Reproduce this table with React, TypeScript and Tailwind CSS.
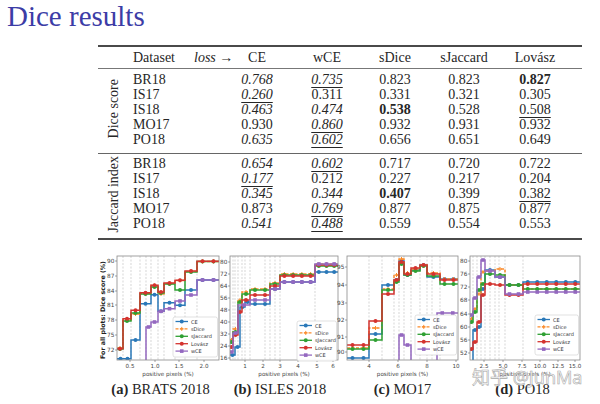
import React from "react";

type Step = [number, number][];

type ChartSpec = {
  id: string;
  width: number;
  boxX: number;
  boxW: number;
  xticks: [number, string][];
  yticks: [number, string][];
  vlines: number[];
  series: Step[]; // CE, sDice, sJaccard, Lovász, wCE
  legend: [number, number];
  label: string;
  name: string;
  captionPad: string;
  yTitle?: boolean;
};

const BOX_H = 104;
const TOP = 2;

const STYLES = [
  { name: "CE", color: "#2a78b8", marker: "o" },
  { name: "sDice", color: "#fb8b2a", marker: "+", dash: true },
  { name: "sJaccard", color: "#2fa033", marker: "o" },
  { name: "Lovász", color: "#d4332f", marker: "o" },
  { name: "wCE", color: "#9468c0", marker: "s" },
];

const DICE = [
  ["BR18", "0.768i 0.735iu 0.823 0.823 0.827b"],
  ["IS17", "0.260iu 0.311 0.331 0.321 0.305"],
  ["IS18", "0.463i 0.474i 0.538b 0.528 0.508u"],
  ["MO17", "0.930 0.860iu 0.932 0.931 0.932"],
  ["PO18", "0.635i 0.602iu 0.656 0.651 0.649"],
];

const JACCARD = [
  ["BR18", "0.654i 0.602iu 0.717 0.720 0.722"],
  ["IS17", "0.177iu 0.212 0.227 0.217 0.204"],
  ["IS18", "0.345i 0.344i 0.407b 0.399 0.382u"],
  ["MO17", "0.873 0.769iu 0.877 0.875 0.877"],
  ["PO18", "0.541i 0.488iu 0.559 0.554 0.553"],
];

const CHARTS: ChartSpec[] = [
  {
    id: "a",
    width: 123,
    boxX: 21,
    boxW: 102,
    xticks: [[13, "0.5"], [38, "1.0"], [62, "1.5"], [87, "2.0"]],
    yticks: [[5, "90"], [20, "87"], [35, "84"], [49, "81"], [64, "78"], [79, "75"], [94, "72"]],
    vlines: [6, 14, 23, 29, 34, 41, 47, 58, 68, 80],
    series: [
      [[0, 102.7], [14, 84], [23, 47.7], [34, 38.7], [41, 55.3], [47, 46.7], [58, 49.3], [68, 34], [80, 24]],
      [[0, 92], [6, 64], [14, 58], [23, 37.5], [34, 29.5], [41, 38], [47, 27.5], [58, 24.5], [68, 15.5], [80, 5.5]],
      [[0, 93], [6, 65], [14, 57], [23, 38], [34, 31], [41, 37], [47, 28], [58, 34], [68, 16], [80, 5.5]],
      [[0, 92.7], [6, 62.7], [14, 54.3], [23, 36.7], [34, 29.3], [41, 36], [47, 27], [58, 24.3], [68, 15], [80, 5.3]],
      [[0, 112], [29, 71], [34, 66], [41, 55.3], [47, 52.7], [58, 45], [68, 39], [80, 24]],
    ],
    legend: [56, 61],
    label: "(a)",
    name: "BRATS 2018",
    captionPad: "pl-[6px]",
    yTitle: true,
  },
  {
    id: "b",
    width: 119,
    boxX: 11,
    boxW: 108,
    xticks: [[15, "1"], [33, "2"], [50, "3"], [68, "4"], [87, "5"], [103, "6"]],
    yticks: [[6, "80"], [18, "72"], [30, "64"], [42, "56"], [54, "48"], [66, "40"], [78, "32"], [90, "24"], [102, "16"]],
    vlines: [3, 5, 8, 12, 15, 20, 35, 40, 45, 50, 85],
    series: [
      [[0, 99], [5, 91], [10, 51], [15, 46], [20, 48], [40, 33], [50, 26], [85, 16]],
      [[0, 84], [3, 73], [8, 44], [12, 36], [20, 33], [40, 27], [50, 18], [85, 8]],
      [[0, 86], [3, 76], [8, 46], [12, 38], [20, 34], [40, 28], [50, 19], [85, 10]],
      [[0, 91], [3, 79], [8, 56], [12, 44], [20, 39], [40, 30], [50, 20], [85, 9]],
      [[0, 96], [3, 77], [8, 49], [20, 44], [40, 33], [50, 26], [85, 8]],
    ],
    legend: [67, 65],
    label: "(b)",
    name: "ISLES 2018",
    captionPad: "pl-[3px]",
  },
  {
    id: "c",
    width: 120,
    boxX: 9,
    boxW: 111,
    xticks: [[22, "4"], [51, "6"], [80, "8"], [109, "10"]],
    yticks: [[11, "95"], [29, "94"], [47, "93"], [64, "92"], [81, "91"], [96, "90"]],
    vlines: [22, 35, 47, 52, 57, 64, 73, 80, 85, 93],
    series: [
      [[0, 102], [22, 78], [35, 29], [47, 24], [52, 5], [57, 19], [64, 14], [73, 9], [80, 21], [93, 23]],
      [[0, 92], [22, 72], [35, 33], [47, 19], [52, 3], [57, 17], [64, 13], [73, 9], [80, 17], [93, 23]],
      [[0, 93], [22, 84], [35, 34], [47, 26], [52, 8], [57, 19], [64, 15], [73, 10], [80, 20], [93, 28]],
      [[0, 89], [22, 65], [35, 38], [47, 24], [52, 6], [57, 18], [64, 12], [73, 9], [80, 18], [93, 24]],
      [[0, 115], [52, 79], [57, 89], [64, 115], [90, 57]],
    ],
    legend: [68, 59],
    label: "(c)",
    name: "MO17",
    captionPad: "pl-[9px]",
  },
  {
    id: "d",
    width: 122,
    boxX: 12,
    boxW: 110,
    xticks: [[14, "2.5"], [33, "5.0"], [52, "7.5"], [70, "10.0"], [88, "12.5"], [105, "15.0"]],
    yticks: [[5, "80"], [18, "76"], [31, "72"], [44, "68"], [58, "64"], [71, "60"], [84, "56"], [97, "52"]],
    vlines: [3, 7, 11, 15, 20, 25, 29, 35, 53],
    series: [
      [[0, 115], [3, 74], [7, 71], [11, 33], [15, 14], [25, 21], [35, 29], [53, 26]],
      [[0, 63], [3, 53], [7, 38], [11, 16], [15, 15], [25, 13], [35, 29], [53, 33]],
      [[0, 66], [3, 56], [7, 34], [11, 28], [15, 18], [25, 19], [35, 29], [53, 33]],
      [[0, 93], [3, 86], [7, 66], [11, 39], [15, 28], [25, 29], [35, 39], [53, 28]],
      [[0, 59], [3, 42], [7, 21], [11, 4], [15, 15], [25, 21], [35, 38], [53, 36]],
    ],
    legend: [65, 59],
    label: "(d)",
    name: "PO18",
    captionPad: "pl-[7px]",
  },
];

function Marker({ x, y, color, kind }: { x: number; y: number; color: string; kind: string }) {
  if (kind === "s") return <rect x={x - 1.8} y={y - 1.8} width={3.6} height={3.6} fill={color} />;
  if (kind === "+")
    return <path d={`M${x - 2} ${y}H${x + 2}M${x} ${y - 2}V${y + 2}`} stroke={color} strokeWidth={1} />;
  return <circle cx={x} cy={y} r={2} fill={color} />;
}

function stepPath(steps: Step, w: number) {
  let d = `M${steps[0][0]} ${steps[0][1]}`;
  for (let i = 1; i < steps.length; i++) d += ` H${steps[i][0]} V${steps[i][1]}`;
  return d + ` H${w}`;
}

function Chart({ spec }: { spec: ChartSpec }) {
  const { boxW, legend } = spec;
  const lw = boxW - legend[0] - 1.5;
  return (
    <svg width={spec.width} height={127} className="overflow-visible" fontFamily="'DejaVu Sans', sans-serif">
      {spec.yTitle && (
        <text
          x={6}
          y={56}
          transform="rotate(-90 6 56)"
          textAnchor="middle"
          dominantBaseline="central"
          fontSize={6.3}
          fontWeight="bold"
          fill="#222"
        >
          For all plots: Dice score (%)
        </text>
      )}
      <g transform={`translate(${spec.boxX},${TOP})`}>
        <defs>
          <clipPath id={`clip-${spec.id}`}>
            <rect x={0} y={0} width={boxW} height={BOX_H} />
          </clipPath>
        </defs>
        {spec.vlines.map((x) => (
          <line key={x} x1={x} x2={x} y1={0} y2={BOX_H} stroke="#c4c4c4" strokeWidth={0.7} strokeDasharray="2 1.5" />
        ))}
        <g clipPath={`url(#clip-${spec.id})`}>
          {spec.series.map((steps, si) => {
            const s = STYLES[si];
            return (
              <g key={s.name}>
                <path
                  d={stepPath(steps, boxW)}
                  fill="none"
                  stroke={s.color}
                  strokeWidth={1.5}
                  strokeDasharray={s.dash ? "3 1.5" : undefined}
                />
                {steps.map(([xs, y], i) => {
                  const xe = i + 1 < steps.length ? steps[i + 1][0] : boxW;
                  if (y > BOX_H + 2) return null;
                  const n = Math.max(1, Math.round((xe - xs) / 9));
                  return Array.from({ length: n }, (_, k) => (
                    <Marker key={`${i}-${k}`} x={xs + ((k + 0.5) * (xe - xs)) / n} y={y} color={s.color} kind={s.marker} />
                  ));
                })}
              </g>
            );
          })}
        </g>
        <rect x={0} y={0} width={boxW} height={BOX_H} fill="none" stroke="#8a8a8a" strokeWidth={0.8} />
        {spec.yticks.map(([y, t]) => (
          <g key={t}>
            <line x1={-2} x2={0} y1={y} y2={y} stroke="#666" strokeWidth={0.6} />
            <text x={-2.5} y={y} textAnchor="end" dominantBaseline="central" fontSize={5.8} fill="#444">
              {t}
            </text>
          </g>
        ))}
        {spec.xticks.map(([x, t]) => (
          <g key={t}>
            <line x1={x} x2={x} y1={BOX_H} y2={BOX_H + 2} stroke="#666" strokeWidth={0.6} />
            <text x={x} y={BOX_H + 5.5} textAnchor="middle" dominantBaseline="central" fontSize={5.6} fill="#444">
              {t}
            </text>
          </g>
        ))}
        <text x={boxW / 2} y={BOX_H + 14} textAnchor="middle" dominantBaseline="central" fontSize={5.6} fill="#444">
          positive pixels (%)
        </text>
        <g transform={`translate(${legend[0]},${legend[1]})`}>
          <rect x={0} y={0} width={lw} height={40} rx={2} fill="#fff" fillOpacity={0.9} stroke="#cfcfcf" strokeWidth={0.6} />
          {STYLES.map((s, i) => {
            const y = 4.5 + i * 7.4;
            return (
              <g key={s.name}>
                <line x1={2.5} x2={15} y1={y} y2={y} stroke={s.color} strokeWidth={1.3} strokeDasharray={s.dash ? "3 1.5" : undefined} />
                <Marker x={8.75} y={y} color={s.color} kind={s.marker} />
                <text x={18} y={y} dominantBaseline="central" fontSize={5} fill="#333">
                  {s.name}
                </text>
              </g>
            );
          })}
        </g>
      </g>
    </svg>
  );
}

function Num({ cell }: { cell: string }) {
  const m = cell.match(/^([\d.]+)([a-z]*)$/)!;
  const f = m[2];
  return (
    <div className="flex justify-center">
      <span
        className={[
          "whitespace-nowrap",
          f.includes("i") ? "italic" : "",
          f.includes("b") ? "font-bold" : "",
          f.includes("u") ? "underline decoration-1 underline-offset-[3px]" : "",
        ].join(" ")}
      >
        {m[1]}
      </span>
    </div>
  );
}

const ROW = "grid grid-cols-[60px_54px_34px_106px_30px_108px_34px_30px] h-[15px] items-center";

function Section({ title, rows }: { title: string; rows: string[][] }) {
  return (
    <div className="flex">
      <div className="w-[28px] flex items-center justify-center pl-[4px]">
        <span className="[writing-mode:vertical-rl] rotate-180 leading-[14px] whitespace-nowrap">{title}</span>
      </div>
      <div className="flex flex-col">
        {rows.map(([ds, vals]) => (
          <div key={ds} className={ROW}>
            <span className="pl-[7px]">{ds}</span>
            <span />
            {vals.split(" ").map((c, i) => (
              <Num key={i} cell={c} />
            ))}
            <span />
          </div>
        ))}
      </div>
    </div>
  );
}

export default function App() {
  return (
    <div className="relative w-[600px] h-[404px] overflow-hidden bg-white font-['Liberation_Serif',serif]">
      <h1 className="pl-[7px] text-[29px] leading-[32px] text-[#3c3ca6]">Dice results</h1>

      <div className="ml-[98px] mt-[13px] w-[484px] text-[14px] leading-[15px] text-[#262626]">
        <div className="h-[1.5px] bg-[#4a4a4a]" />
        <div className="flex h-[21px] items-center">
          <div className="w-[28px]" />
          <div className="grid grid-cols-[60px_54px_34px_106px_30px_108px_34px_30px] items-center">
            <span className="pl-[7px]">Dataset</span>
            <span className="pl-[8px] whitespace-nowrap">
              <i>loss</i> →
            </span>
            {["CE", "wCE", "sDice", "sJaccard", "Lovász"].map((h) => (
              <div key={h} className="flex justify-center">
                <span className="whitespace-nowrap">{h}</span>
              </div>
            ))}
          </div>
        </div>
        <div className="h-px bg-[#777]" />
        <div className="mt-[3px]">
          <Section title="Dice score" rows={DICE} />
        </div>
        <div className="mt-[6px] h-px bg-[#666]" />
        <div className="mt-[2px]">
          <Section title="Jaccard index" rows={JACCARD} />
        </div>
        <div className="mt-[6px] h-[1.5px] bg-[#4a4a4a]" />
      </div>

      <div className="ml-[96px] mt-[14px] flex">
        {CHARTS.map((c) => (
          <div key={c.id} className="flex flex-col">
            <Chart spec={c} />
            <div className={`text-center text-[14.5px] leading-[16px] text-[#262626] whitespace-nowrap ${c.captionPad}`}>
              <span className="font-bold">{c.label}</span> {c.name}
            </div>
          </div>
        ))}
      </div>

      <div className="absolute left-[472px] top-[366px] whitespace-nowrap text-[18px] leading-[22px] text-[rgba(255,255,255,0.85)] [-webkit-text-stroke:0.6px_#a8a8a8] font-['Noto_Sans','Noto_Sans_CJK_SC',sans-serif]">
        知乎 @JunMa
      </div>
    </div>
  );
}
